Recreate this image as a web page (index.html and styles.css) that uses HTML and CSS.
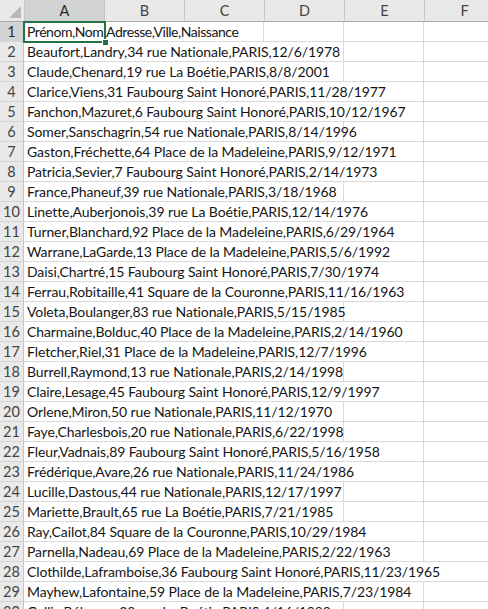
FILE: index.html
```html
<!DOCTYPE html>
<html>
<head>
<meta charset="utf-8">
<link rel="stylesheet" href="styles.css">
</head>
<body>
<div class="sheet">
  <div class="hdr">
    <div class="corner"><span class="tri"></span></div>
    <div class="ch sel">A</div>
    <div class="ch">B</div>
    <div class="ch">C</div>
    <div class="ch">D</div>
    <div class="ch">E</div>
    <div class="ch">F</div>
  </div>
  <div class="row"><div class="rh rsel">1</div><div class="cells"><div class="c s3 tight">Prénom,Nom,Adresse,Ville,Naissance</div><div class="c"></div><div class="c"></div><div class="c"></div></div></div>
  <div class="row"><div class="rh">2</div><div class="cells"><div class="c s4">Beaufort,Landry,34 rue Nationale,PARIS,12/6/1978</div><div class="c"></div><div class="c"></div></div></div>
  <div class="row"><div class="rh">3</div><div class="cells"><div class="c s4">Claude,Chenard,19 rue La Boétie,PARIS,8/8/2001</div><div class="c"></div><div class="c"></div></div></div>
  <div class="row"><div class="rh">4</div><div class="cells"><div class="c s5">Clarice,Viens,31 Faubourg Saint Honoré,PARIS,11/28/1977</div><div class="c"></div></div></div>
  <div class="row"><div class="rh">5</div><div class="cells"><div class="c s5">Fanchon,Mazuret,6 Faubourg Saint Honoré,PARIS,10/12/1967</div><div class="c"></div></div></div>
  <div class="row"><div class="rh">6</div><div class="cells"><div class="c s4">Somer,Sanschagrin,54 rue Nationale,PARIS,8/14/1996</div><div class="c"></div><div class="c"></div></div></div>
  <div class="row"><div class="rh">7</div><div class="cells"><div class="c s5">Gaston,Fréchette,64 Place de la Madeleine,PARIS,9/12/1971</div><div class="c"></div></div></div>
  <div class="row"><div class="rh">8</div><div class="cells"><div class="c s5">Patricia,Sevier,7 Faubourg Saint Honoré,PARIS,2/14/1973</div><div class="c"></div></div></div>
  <div class="row"><div class="rh">9</div><div class="cells"><div class="c s4">France,Phaneuf,39 rue Nationale,PARIS,3/18/1968</div><div class="c"></div><div class="c"></div></div></div>
  <div class="row"><div class="rh">10</div><div class="cells"><div class="c s5">Linette,Auberjonois,39 rue La Boétie,PARIS,12/14/1976</div><div class="c"></div></div></div>
  <div class="row"><div class="rh">11</div><div class="cells"><div class="c s5">Turner,Blanchard,92 Place de la Madeleine,PARIS,6/29/1964</div><div class="c"></div></div></div>
  <div class="row"><div class="rh">12</div><div class="cells"><div class="c s5">Warrane,LaGarde,13 Place de la Madeleine,PARIS,5/6/1992</div><div class="c"></div></div></div>
  <div class="row"><div class="rh">13</div><div class="cells"><div class="c s5">Daisi,Chartré,15 Faubourg Saint Honoré,PARIS,7/30/1974</div><div class="c"></div></div></div>
  <div class="row"><div class="rh">14</div><div class="cells"><div class="c s5">Ferrau,Robitaille,41 Square de la Couronne,PARIS,11/16/1963</div><div class="c"></div></div></div>
  <div class="row"><div class="rh">15</div><div class="cells"><div class="c s4">Voleta,Boulanger,83 rue Nationale,PARIS,5/15/1985</div><div class="c"></div><div class="c"></div></div></div>
  <div class="row"><div class="rh">16</div><div class="cells"><div class="c s5">Charmaine,Bolduc,40 Place de la Madeleine,PARIS,2/14/1960</div><div class="c"></div></div></div>
  <div class="row"><div class="rh">17</div><div class="cells"><div class="c s5">Fletcher,Riel,31 Place de la Madeleine,PARIS,12/7/1996</div><div class="c"></div></div></div>
  <div class="row"><div class="rh">18</div><div class="cells"><div class="c s4">Burrell,Raymond,13 rue Nationale,PARIS,2/14/1998</div><div class="c"></div><div class="c"></div></div></div>
  <div class="row"><div class="rh">19</div><div class="cells"><div class="c s5">Claire,Lesage,45 Faubourg Saint Honoré,PARIS,12/9/1997</div><div class="c"></div></div></div>
  <div class="row"><div class="rh">20</div><div class="cells"><div class="c s4">Orlene,Miron,50 rue Nationale,PARIS,11/12/1970</div><div class="c"></div><div class="c"></div></div></div>
  <div class="row"><div class="rh">21</div><div class="cells"><div class="c s4">Faye,Charlesbois,20 rue Nationale,PARIS,6/22/1998</div><div class="c"></div><div class="c"></div></div></div>
  <div class="row"><div class="rh">22</div><div class="cells"><div class="c s5">Fleur,Vadnais,89 Faubourg Saint Honoré,PARIS,5/16/1958</div><div class="c"></div></div></div>
  <div class="row"><div class="rh">23</div><div class="cells"><div class="c s5">Frédérique,Avare,26 rue Nationale,PARIS,11/24/1986</div><div class="c"></div></div></div>
  <div class="row"><div class="rh">24</div><div class="cells"><div class="c s4">Lucille,Dastous,44 rue Nationale,PARIS,12/17/1997</div><div class="c"></div><div class="c"></div></div></div>
  <div class="row"><div class="rh">25</div><div class="cells"><div class="c s4">Mariette,Brault,65 rue La Boétie,PARIS,7/21/1985</div><div class="c"></div><div class="c"></div></div></div>
  <div class="row"><div class="rh">26</div><div class="cells"><div class="c s5">Ray,Cailot,84 Square de la Couronne,PARIS,10/29/1984</div><div class="c"></div></div></div>
  <div class="row"><div class="rh">27</div><div class="cells"><div class="c s5">Parnella,Nadeau,69 Place de la Madeleine,PARIS,2/22/1963</div><div class="c"></div></div></div>
  <div class="row"><div class="rh">28</div><div class="cells"><div class="c s6">Clothilde,Laframboise,36 Faubourg Saint Honoré,PARIS,11/23/1965</div></div></div>
  <div class="row"><div class="rh">29</div><div class="cells"><div class="c s5">Mayhew,Lafontaine,59 Place de la Madeleine,PARIS,7/23/1984</div><div class="c"></div></div></div>
  <div class="row"><div class="rh">30</div><div class="cells"><div class="c s4">Gallia,Bélanger,20 rue La Boétie,PARIS,4/16/1989</div><div class="c"></div><div class="c"></div></div></div>
  <div class="selbox"><span class="handle"></span></div>
</div>
</body>
</html>
```
FILE: styles.css
```css
html, body {
  margin: 0;
  padding: 0;
  background: #fff;
}
body {
  width: 488px;
  height: 609px;
  overflow: hidden;
  font-family: Lato, "Open Sans", sans-serif;
  font-size: 14px;
  letter-spacing: -0.1px;
  color: #151515;
}
.sheet {
  position: relative;
  width: 560px;
}
.hdr {
  display: flex;
  height: 21px;
  background: #e9e9e9;
  border-bottom: 1px solid #ababab;
}
.corner {
  width: 24px;
  flex: none;
  border-right: 1px solid #c6c6c6;
  position: relative;
}
.tri {
  position: absolute;
  right: 3px;
  bottom: 3px;
  width: 0;
  height: 0;
  border-left: 12px solid transparent;
  border-bottom: 12px solid #b9b9b9;
}
.ch {
  width: 79px;
  flex: none;
  border-right: 1px solid #c6c6c6;
  text-align: center;
  line-height: 21px;
  font-size: 14.5px;
  letter-spacing: 0;
  color: #444;
}
.ch.sel {
  background: #d3d3d3;
  color: #2b2b2b;
}
.row {
  display: flex;
  height: 19px;
  border-bottom: 1px solid #d9d9d9;
}
.rh {
  width: 24px;
  flex: none;
  background: #e9e9e9;
  border-right: 1px solid #c6c6c6;
  text-align: center;
  line-height: 20px;
  font-size: 14.5px;
  letter-spacing: 0;
  color: #444;
  box-shadow: inset 0 -1px 0 #d4d4d4;
  height: 20px;
  box-sizing: border-box;
}
.rh.rsel {
  background: #d3d3d3;
  color: #2b2b2b;
}
.cells {
  flex: none;
  display: flex;
  width: 480px;
  height: 19px;
}
.c {
  flex: none;
  width: 80px;
  height: 19px;
  box-sizing: border-box;
  border-right: 1px solid #d9d9d9;
  line-height: 20px;
  padding-left: 3px;
  white-space: nowrap;
}
.s3 { width: 240px; }
.s4 { width: 320px; }
.s5 { width: 400px; }
.s6 { width: 480px; }
.tight { letter-spacing: -0.45px; }
.selbox {
  position: absolute;
  left: 23px;
  top: 21px;
  width: 83px;
  height: 22px;
  border: 2px solid #217346;
  box-sizing: border-box;
}
.handle {
  position: absolute;
  right: -5px;
  bottom: -5px;
  width: 5px;
  height: 5px;
  background: #217346;
  border: 1px solid #fff;
}
```
